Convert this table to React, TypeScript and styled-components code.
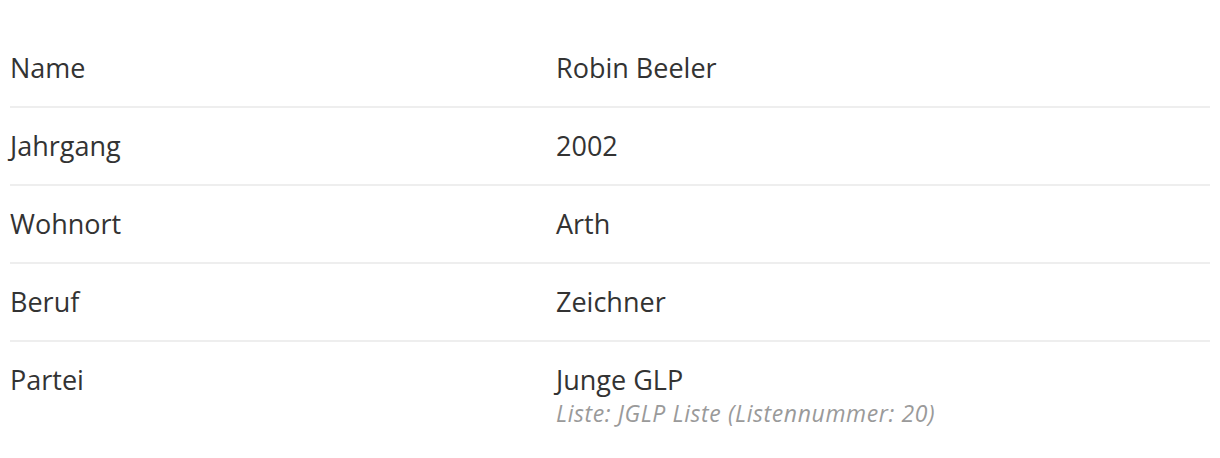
import React from "react";
import styled, { createGlobalStyle } from "styled-components";

const GlobalStyle = createGlobalStyle`
  body {
    margin: 0;
    background: #ffffff;
    font-family: "Open Sans", "Noto Sans", sans-serif;
  }
`;

const rows = [
  { label: "Name", value: "Robin Beeler" },
  { label: "Jahrgang", value: "2002" },
  { label: "Wohnort", value: "Arth" },
  { label: "Beruf", value: "Zeichner" },
  {
    label: "Partei",
    value: "Junge GLP",
    note: "Liste: JGLP Liste (Listennummer: 20)",
  },
];

function App() {
  return (
    <>
      <GlobalStyle />
      <Table>
        {rows.map((row, i) => (
          <Row key={row.label} last={i === rows.length - 1}>
            <Label>{row.label}</Label>
            <Value>
              {row.value}
              {row.note && <Note>{row.note}</Note>}
            </Value>
          </Row>
        ))}
      </Table>
    </>
  );
}

const Table = styled.div`
  display: flex;
  flex-direction: column;
  padding: 30px 10px 0;
`;

const Row = styled.div<{ last?: boolean }>`
  display: grid;
  grid-template-columns: 546px 1fr;
  padding: 21px 0 22px;
  border-bottom: ${(p) => (p.last ? "none" : "2px solid #eeeeee")};
`;

const Label = styled.div`
  font-size: 27px;
  line-height: 33px;
  color: #333333;
`;

const Value = styled.div`
  font-size: 27px;
  line-height: 33px;
  color: #333333;
`;

const Note = styled.div`
  margin-top: 3px;
  font-size: 23px;
  line-height: 28px;
  font-style: italic;
  letter-spacing: 0.6px;
  color: #9a9a9a;
`;

export default App;
